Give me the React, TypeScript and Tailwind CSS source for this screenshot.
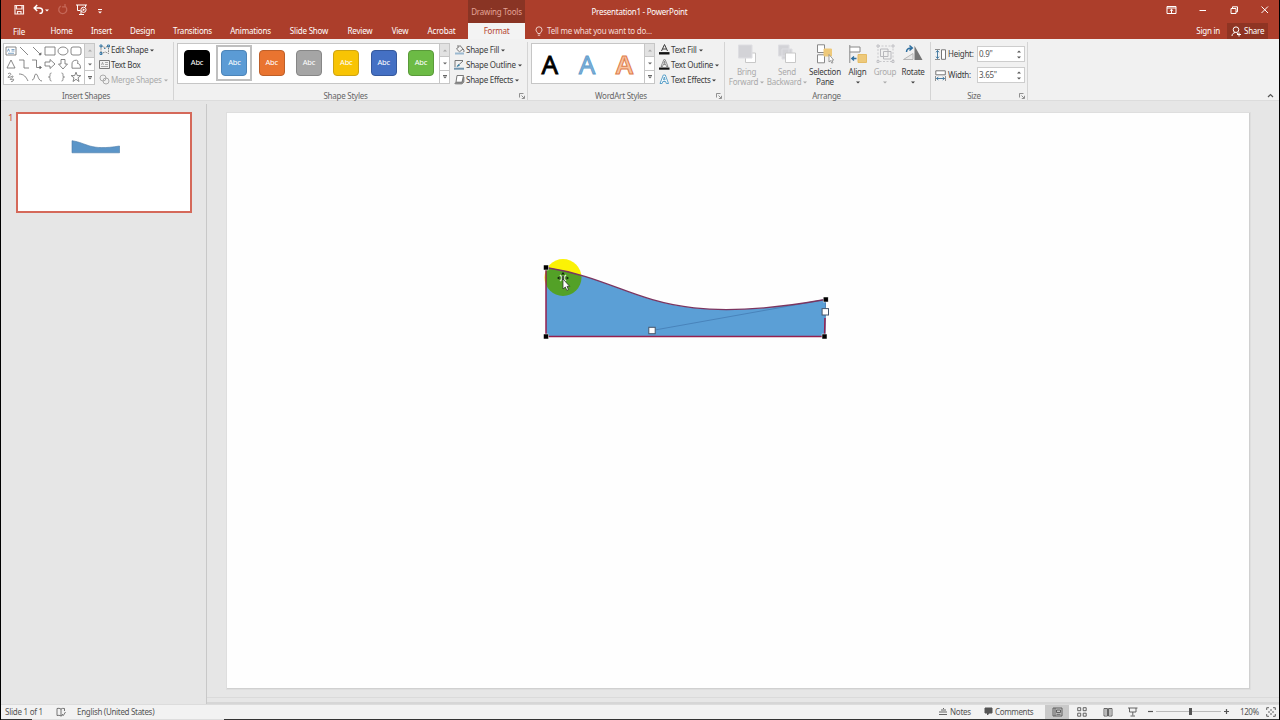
import React from 'react';
import clsx from 'clsx';

const TABS = [
  { label: 'File', cls: 'w-9 pt-px' },
  { label: 'Home', cls: 'w-[49px]' },
  { label: 'Insert', cls: 'w-[31px]' },
  { label: 'Design', cls: 'w-[51px]' },
  { label: 'Transitions', cls: 'w-[49px]' },
  { label: 'Animations', cls: 'w-[67px]' },
  { label: 'Slide Show', cls: 'w-[50px]' },
  { label: 'Review', cls: 'w-[52px]' },
  { label: 'View', cls: 'w-7' },
  { label: 'Acrobat', cls: 'w-[54px] pl-px' },
];

const SHAPE_STYLES = [
  'bg-black border-black',
  'bg-[#5b9bd5] border-[#4c84b8]',
  'bg-[#e97430] border-[#bd5f29]',
  'bg-[#a5a5a5] border-[#868686]',
  'bg-[#f8c404] border-[#cda312]',
  'bg-[#4470c4] border-[#35589c]',
  'bg-[#6cbb45] border-[#5a9a3a]',
];

// 12x12 glyphs of the shape gallery, row by row
const SHAPES: React.ReactNode[] = [
  <><path d="M1 2h10v8H1z" /><path d="M2.500 6.500l1-2.700 1 2.700M6.500 4.500H9.500M6.500 6H9.500M3 8.300h6" stroke="#4a7fb0" strokeWidth=".7" /></>,
  <path d="M2 2l8 8" />,
  <><path d="M2 2l7.5 7.500" /><path d="M8 9.800h2V7.800z" fill="#6a6a6a" /></>,
  <path d="M1 2h10v8H1z" />,
  <ellipse cx="6" cy="6" rx="5" ry="4" />,
  <rect x="1" y="2" width="10" height="8" rx="2" />,
  <path d="M6 2l4 8H2z" />,
  <path d="M1 2h5v8h5" />,
  <><path d="M1 2h4.500v7.500H9" /><path d="M8.800 8.300l1.700 1.200-1.700 1.200z" fill="#6a6a6a" /></>,
  <path d="M1 4h5V1.500L11 6l-5 4.500V8H1z" />,
  <path d="M4 1.500h4V6h2.500L6 11 1.500 6H4z" />,
  <path d="M2 10.200V6q0-3.800 4.500-3.800Q9 2.500 7.500 5.500 10.500 5.500 10.500 10.200z" />,
  <path d="M3 3c2-2 4 0 2 1.500S2 6 3.500 6.500 8 4 8 5.500 4 8 5.500 8.500 9 7 8.500 9 6 10.500 6 10.500" />,
  <path d="M1 3c5 0 7 3 9 7" />,
  <path d="M1 9c3 0 2-6 4-6s2 7 6 7" />,
  <path d="M7.500 2C6 2 6 3 6 4.500S5.500 6 4.500 6C5.500 6 6 6.200 6 7.500S6 10 7.500 10" />,
  <path d="M4.500 2C6 2 6 3 6 4.500S6.500 6 7.500 6C6.500 6 6 6.200 6 7.500S6 10 4.500 10" />,
  <path d="M6 1.200l1.300 3.400h3.500L8 6.800l1 3.700-3-2.200-3 2.200 1-3.700L1.200 4.600h3.500z" />,
];

interface IconProps {
  w: number;
  h: number;
  className?: string;
  children: React.ReactNode;
}

const Icon: React.FC<IconProps> = ({ w, h, className, children }) => (
  <svg width={w} height={h} viewBox={`0 0 ${w} ${h}`} fill="none" stroke="currentColor" className={clsx('shrink-0', className)}>
    {children}
  </svg>
);

const Caret: React.FC<{ className?: string }> = ({ className }) => (
  <svg width="4" height="3" viewBox="0 0 4 3" className={clsx('shrink-0 fill-current', className)}>
    <path d="M0 .5h4L2 2.600z" />
  </svg>
);

const GalleryScroll = () => (
  <div className="w-[10px] border-l border-[#c6c6c6] flex flex-col text-[#666]">
    <div className="flex-1 flex items-center justify-center bg-[#e2e2e2] text-[#aaa]"><Caret className="rotate-180" /></div>
    <div className="flex-1 flex items-center justify-center border-y border-[#c6c6c6]"><Caret /></div>
    <div className="flex-1 flex flex-col items-center justify-center">
      <div className="w-1 h-px bg-current"></div>
      <Caret />
    </div>
  </div>
);

const Launcher = () => (
  <Icon w={6} h={6} className="text-[#777]">
    <path d="M.5 4.500v-4h4M2.500 2.500l2.500 2.500M5.500 2.800v2.700H2.800" strokeWidth=".8" />
  </Icon>
);

interface GroupProps {
  name: string;
  width: string;
  launcher?: boolean;
  children: React.ReactNode;
}

const Group: React.FC<GroupProps> = ({ name, width, launcher, children }) => (
  <div className={clsx('h-[58px] mt-[3px] border-r border-[#d4d4d4] flex flex-col shrink-0', width)}>
    <div className="h-[47px] shrink-0 flex items-start">{children}</div>
    <div className="h-[11px] pt-[2px] flex items-center text-[#666]">
      <span className="flex-1 text-center pr-[2px]">{name}</span>
      {launcher && <div className="w-2"><Launcher /></div>}
    </div>
  </div>
);

interface CommandProps {
  icon: React.ReactNode;
  label: string;
  caret?: boolean;
  disabled?: boolean;
}

const Command: React.FC<CommandProps> = ({ icon, label, caret, disabled }) => (
  <div className={clsx('h-[15.2px] flex items-center', disabled ? 'text-[#aaa]' : 'text-[#3c3c3c]')}>
    <div className="w-3 flex">{icon}</div>
    <span>{label}</span>
    {caret && <Caret className="ml-[2px] mt-px" />}
  </div>
);

interface BigButtonProps {
  icon: React.ReactNode;
  width: string;
  lines: string[];
  caret?: boolean;
  disabled?: boolean;
}

const BigButton: React.FC<BigButtonProps> = ({ icon, width, lines, caret, disabled }) => (
  <div className={clsx('flex flex-col items-center shrink-0', width, disabled ? 'text-[#aaa]' : 'text-[#3c3c3c]')}>
    <div className="h-6 pt-[2px]">{icon}</div>
    <div className="h-[11px] leading-[11px]">{lines[0]}</div>
    <div className="h-[10px] leading-[10px] flex items-center gap-[2px]">
      {lines[1]}
      {caret && <Caret className="mt-px" />}
    </div>
  </div>
);

const TitleBar = () => (
  <div className="h-[23px] flex text-white">
    <div className="w-[467px] flex items-start pt-1 pl-[13px]">
      <Icon w={11} h={11} className="text-[#fbe9e6]">
        <path d="M1 1.500h8.500v8.500H1zM2.500 2v3h5.500V2M3.500 10V7.500h3.500V10" strokeWidth="1.200" />
      </Icon>
      <Icon w={11} h={11} className="ml-2">
        <path d="M1 4h5.500q3 0 3 2.800T6.500 9.200M4.200 1L1.200 4l3 3" strokeWidth="1.500" />
      </Icon>
      <Caret className="mt-[5px] ml-px" />
      <Icon w={11} h={11} className="ml-2 text-[#c56757]">
        <path d="M7.500 2A4 4 0 1 1 4 2M8 0v2.800H5" strokeWidth="1.300" />
      </Icon>
      <Icon w={12} h={12} className="ml-2">
        <path d="M0 1h11M1.500 1v5.500h3M9.500 1v2M3 10.500h5M5 7v3" />
        <circle cx="7.500" cy="5.800" r="2.600" />
        <path d="M6.800 4.600v2.400L8.800 5.800z" fill="currentColor" strokeWidth=".3" />
      </Icon>
      <div className="ml-[10px] mt-[5px] flex flex-col items-center gap-px">
        <div className="w-1 h-px bg-white"></div>
        <Caret />
      </div>
    </div>
    <div className="w-[57px] bg-[#893424] text-[#e3a397] text-center leading-6 tracking-[-0.2px]">Drawing Tools</div>
    <div className="w-[229px] text-center leading-6 tracking-[-0.25px]">Presentation1 - PowerPoint</div>
    <div className="flex-1 flex justify-end items-start pt-1 pr-[10px]">
      <Icon w={11} h={11}>
        <path d="M1 2.500h9v7H1zM1 4h9M5.500 9V5.300M3.800 6.900l1.700-1.600 1.700 1.600" />
      </Icon>
      <Icon w={8} h={11} className="ml-[22px]"><path d="M.5 6.500h6.500" /></Icon>
      <Icon w={9} h={11} className="ml-[23px]"><path d="M1 4.500h5v5H1zM2.500 4.500V2.800h5v5H6" /></Icon>
      <Icon w={9} h={11} className="ml-[21px]"><path d="M1.500 2.500l6.500 6.500M8 2.500l-6.500 6.500" /></Icon>
    </div>
  </div>
);

const TabRow = () => (
  <div className="h-4 flex items-stretch text-white leading-4">
    {TABS.map((tab) => (
      <div key={tab.label} className={clsx('text-center whitespace-nowrap tracking-[-0.2px]', tab.cls)}>{tab.label}</div>
    ))}
    <div className="w-[57px] bg-[#f3f3f3] text-[#b5432f] text-center">Format</div>
    <div className="flex-1 flex items-center pl-[10px] text-[#f6dcd7]">
      <Icon w={8} h={11}>
        <path d="M2.800 7.500C2.500 6.300 1 5.500 1 3.800a3 3 0 0 1 6 0c0 1.700-1.500 2.500-1.800 3.700zM2.800 9.200h2.400" strokeWidth=".9" />
      </Icon>
      <span className="ml-1 tracking-[-0.24px]">Tell me what you want to do...</span>
    </div>
    <div className="mr-[7px]">Sign in</div>
    <div className="w-[41px] mr-[11px] bg-[#8f3423] flex items-center pl-1">
      <Icon w={11} h={11}>
        <circle cx="5" cy="3.700" r="2.800" />
        <path d="M1 10c0-2 1.500-3.200 3-3.400M5.500 6.600l1.500 1.500M8 6.500v4M6 8.500h4" />
      </Icon>
      <span className="ml-[2px]">Share</span>
    </div>
  </div>
);

const Ribbon = () => (
  <div className="h-[62px] bg-[#f1f1f1] border-b border-[#dcdcdc] flex text-[#444]">
    {/* Insert Shapes */}
    <Group name="Insert Shapes" width="w-[173px]">
      <div className="mt-px ml-[2px] w-[92px] h-[42px] border border-[#c6c6c6] bg-white flex shrink-0">
        <div className="flex-1 grid grid-cols-6 items-center justify-items-center pb-px pr-px">
          {SHAPES.map((shape, idx) => (
            <Icon key={idx} w={12} h={12} className="text-[#6a6a6a] [stroke-width:.8]">{shape}</Icon>
          ))}
        </div>
        <GalleryScroll />
      </div>
      <div className="ml-1">
        <Command caret label="Edit Shape" icon={
          <Icon w={11} h={11} className="text-[#7a7a7a]">
            <path d="M2 2l4 1.500L9.500 2v7.500L6.500 8 2 9.500z" strokeDasharray="1.500 1" />
            <path d="M1 1h2v2H1zM8.500 1h2v2h-2zM1 8.500h2v2H1zM5 4.500h1.500" stroke="#2f76a8" strokeWidth=".9" />
          </Icon>
        } />
        <Command label="Text Box" icon={
          <Icon w={11} h={11} className="text-[#7a7a7a]">
            <path d="M.5 1.500h10v8H.5z" />
            <path d="M2.500 6l1-2.700 1 2.700M6 3.500h3M6 5.500h3M2 7.500h7" strokeWidth=".6" />
          </Icon>
        } />
        <Command caret disabled label="Merge Shapes" icon={
          <Icon w={11} h={11}><circle cx="4" cy="4" r="3" /><circle cx="7" cy="7" r="3" /></Icon>
        } />
      </div>
    </Group>

    {/* Shape Styles */}
    <Group name="Shape Styles" width="w-[354px]" launcher>
      <div className="mt-px ml-[3px] w-[273px] h-[41px] border border-[#c6c6c6] bg-white flex shrink-0">
        <div className="flex-1 flex items-center justify-between pl-px pb-[2px]">
          {SHAPE_STYLES.map((style, idx) => (
            <div key={style} className={clsx('p-[3px] border-2', idx === 1 ? 'border-[#bfbfbf]' : 'border-transparent')}>
              <div className={clsx('size-[26px] rounded-[4px] border text-white text-[7.500px] tracking-[-0.2px] text-center leading-[23px]', style)}>Abc</div>
            </div>
          ))}
        </div>
        <GalleryScroll />
      </div>
      <div className="ml-1">
        <Command caret label="Shape Fill" icon={
          <Icon w={11} h={11} className="text-[#6a6a6a]">
            <path d="M2.500 5l3.500-3.500L9 5 5.500 7.800zM4 3.500V1M9.300 5q1.200 2 .5 3" strokeWidth=".9" />
            <path d="M1 9.500h9" stroke="#9bb9d0" strokeWidth="2" />
          </Icon>
        } />
        <Command caret label="Shape Outline" icon={
          <Icon w={11} h={11} className="text-[#6a6a6a]">
            <path d="M1 8V1.500h8M3.500 7l5.500-5" strokeWidth=".9" />
            <path d="M3 7.500l1.500-2 1 1z" fill="#2f7fa8" stroke="#2f7fa8" strokeWidth=".6" />
            <path d="M0 9.700h10" stroke="#7394ad" strokeWidth="2" />
          </Icon>
        } />
        <Command caret label="Shape Effects" icon={
          <Icon w={11} h={11} className="text-[#6a6a6a]">
            <path d="M2 8.500c-2 .5-1.500 1.500.5 1.500H8l2-2V3L8.500 4v4.500z" fill="#999" strokeWidth=".6" />
            <path d="M3 1.500h6.500L8 8.200H2z" fill="#fff" strokeWidth=".9" />
          </Icon>
        } />
      </div>
    </Group>

    {/* WordArt Styles */}
    <Group name="WordArt Styles" width="w-[197px]" launcher>
      <div className="mt-px ml-[3px] w-[124px] h-[41px] border border-[#c6c6c6] bg-white flex shrink-0">
        <div className="flex-1 -ml-px pr-px pt-[2px] grid grid-cols-3 items-center justify-items-center text-[26px] leading-[37px]">
          <span className="text-black [-webkit-text-stroke:0.8px_#000]">A</span>
          <span className="text-[#7db0da] [-webkit-text-stroke:0.8px_#5f9bc9]">A</span>
          <span className="text-[#f7c19f] font-semibold [-webkit-text-stroke:1px_#df7d4a]">A</span>
        </div>
        <GalleryScroll />
      </div>
      <div className="ml-1">
        <Command caret label="Text Fill" icon={
          <Icon w={11} h={11}>
            <path d="M2.500 7L5.500.5 8.500 7M3.500 5h4" />
            <path d="M0 9.300h10.500" stroke="#111" strokeWidth="2.400" />
          </Icon>
        } />
        <Command caret label="Text Outline" icon={
          <Icon w={11} h={11} className="text-[#666]">
            <path d="M2 7.500L4.800.7h1.400L9 7.500H7.500L6.800 5.500H4.200L3.500 7.500zM4.800 4.300L5.500 2.200l.7 2.100z" strokeWidth=".7" />
            <path d="M0 9.600h10.500" stroke="#111" strokeWidth="2.200" />
          </Icon>
        } />
        <Command caret label="Text Effects" icon={
          <Icon w={11} h={11}>
            <path d="M1 9.500L4.300 1h2L9.500 9.500H7.300L6.700 7.500H3.800L3.100 9.500zM4.500 5.800L5.300 3l.8 2.800z" fill="#fff" stroke="#4b97c4" strokeWidth=".9" />
          </Icon>
        } />
      </div>
    </Group>

    {/* Arrange */}
    <Group name="Arrange" width="w-[206px]">
      <BigButton disabled caret width="w-[43px]" lines={['Bring', 'Forward']} icon={
        <Icon w={18} h={20}><path d="M7.500 9H17.500v9.500H7.500z" fill="#fff" stroke="#c8c8c8" /><path d="M.5 1H14v13H.5z" fill="#d3d3d7" stroke="#dedee2" /></Icon>
      } />
      <BigButton disabled caret width="w-[38px]" lines={['Send', 'Backward']} icon={
        <Icon w={18} h={20}><path d="M.5 1H11v11H.5zM4 5h10v10H4z" fill="#d3d3d7" stroke="#dedee2" /><path d="M7.500 9H17.500v9.500H7.500z" fill="#fff" stroke="#c8c8c8" /></Icon>
      } />
      <BigButton width="w-[38px]" lines={['Selection', 'Pane']} icon={
        <Icon w={18} h={20} className="text-[#888]">
          <path d="M1.500.8h7v7.700h-7zM1.500 10.800h7v8h-7z" fill="#fff" />
          <path d="M8 5h7.500v7H8z" fill="#eec97a" stroke="#eec97a" />
          <path d="M13 10.500v7.500l1.600-1.400 1.200 2.600 1.200-.6-1.200-2.500h1.900z" fill="#fff" strokeWidth=".8" />
        </Icon>
      } />
      <BigButton caret width="w-[27px]" lines={['Align', '']} icon={
        <Icon w={18} h={20} className="text-[#888]">
          <path d="M.8 1v18M.8 3H11v5H.8" fill="#fff" />
          <path d="M9 10.500h8.500v8H9z" fill="#eec97a" stroke="#e5bc66" />
          <path d="M2.500 14.500H7.500M5 12.500l-2.200 2 2.200 2" stroke="#2f6f9f" strokeWidth="1.400" />
        </Icon>
      } />
      <BigButton disabled caret width="w-7" lines={['Group', '']} icon={
        <Icon w={19} h={20} className="text-[#b8b8bc]">
          <path d="M2 2h15v15.500H2z" strokeDasharray="2 1.500" strokeWidth=".7" />
          <path d="M4.500 5h7.500v7.500H4.500zM7.500 7.500h7.500V15H7.500z" />
          <path d="M1 1h2v2H1zM16 1h2v2h-2zM1 16.500h2v2H1zM16 16.500h2v2h-2z" fill="#f1f1f1" strokeWidth=".8" />
        </Icon>
      } />
      <BigButton caret width="w-7" lines={['Rotate', '']} icon={
        <Icon w={20} h={20}>
          <path d="M10 15.500V9.500L.5 15.500z" fill="#e8e8e8" stroke="#a8a8a8" strokeWidth=".8" />
          <path d="M11.500 1.800v14.200h8z" fill="#757575" stroke="none" />
          <path d="M3.500 8q0-4 5-4M6.500 1.500L9.300 4 6.500 6.500" stroke="#2f6f9f" strokeWidth="1.500" />
        </Icon>
      } />
    </Group>

    {/* Size */}
    <Group name="Size" width="w-[97px]" launcher>
      <div className="ml-1 mt-[4px] flex flex-col gap-[5px]">
        {[{ name: 'Height:', value: '0.9"' }, { name: 'Width:', value: '3.65"' }].map((field) => (
          <div key={field.name} className="h-4 flex items-center text-[#3c3c3c]">
            {field.name === 'Height:' ? (
              <Icon w={11} h={11} className="text-[#777]">
                <path d="M6.500.8h4v9.500h-4z" fill="#fff" />
                <path d="M0 .5h5M0 10.500h5" strokeWidth=".8" />
                <path d="M2.500 1.500v8M1 3.300l1.500-1.800L4 3.300M1 7.700l1.500 1.800L4 7.700" stroke="#39739c" strokeWidth=".9" />
              </Icon>
            ) : (
              <Icon w={11} h={11} className="text-[#777]">
                <path d="M.8.800h9.500v4H.8z" fill="#fff" />
                <path d="M.5 6v5M10.500 6v5" strokeWidth=".8" />
                <path d="M1.500 8.500h8M3.300 7L1.500 8.500 3.300 10M7.700 7l1.800 1.500L7.700 10" stroke="#39739c" strokeWidth=".9" />
              </Icon>
            )}
            <span className="w-[31px] pl-[2px] whitespace-nowrap">{field.name}</span>
            <div className="w-[48px] h-4 bg-white border border-[#cdcdcd] flex items-center justify-between pl-px pr-[3px] text-[#555]">
              <span>{field.value}</span>
              <div className="flex flex-col gap-[3px]">
                <Caret className="rotate-180" />
                <Caret />
              </div>
            </div>
          </div>
        ))}
      </div>
    </Group>
    <div className="flex-1 flex justify-end items-end pr-[5px] pb-[2px] text-[#555]">
      <Icon w={7} h={5}><path d="M1 4l2.500-2.500L6 4" strokeWidth="1.200" /></Icon>
    </div>
  </div>
);

const CURVE = 'M546 267.500C639 282 652 330.500 825.500 299.500L824.500 336.500H546z';

const Slide = () => (
  <svg width="1022" height="575" viewBox="227 113 1022 575" fill="none">
    <clipPath id="shape"><path d={CURVE} /></clipPath>
    <circle cx="563" cy="277.500" r="18.500" fill="#fbf205" />
    <path d={CURVE} fill="#5b9fd6" />
    <circle cx="563" cy="277.500" r="18.500" fill="#53a127" clipPath="url(#shape)" />
    <path d="M825.500 299.500L652 330.500" stroke="#4680b8" strokeWidth=".9" />
    <path d="M825.500 299.500L825 336" stroke="#4680b8" />
    <path d="M825.500 299.500C652 330.500 639 282 546 267.500" stroke="#7b3560" strokeWidth="1.300" />
    <path d="M546 267.500V336.500H824.500L825 318" stroke="#95214f" strokeWidth="1.500" />
    {[[546, 267.5], [546, 336.5], [824.5, 336.5], [825.7, 299.5]].map(([x, y]) => (
      <rect key={`${x}-${y}`} x={x - 2.5} y={y - 2.5} width="5" height="5" fill="#000" stroke="#fff" strokeWidth=".5" />
    ))}
    {[[652, 330.5], [825.3, 311.8]].map(([x, y]) => (
      <rect key={x} x={x - 3.2} y={y - 3.2} width="6.400" height="6.400" fill="#fff" stroke="#44546a" />
    ))}
    {/* edit-points cursor */}
    <path d="M560 275l6 6M566 275l-6 6" stroke="#dce9d4" strokeWidth="1.400" />
    <circle cx="563" cy="278" r="2.200" fill="#b9cfae" />
    <path d="M563 272l1.800 2.500h-3.600zM557 278l2.500-1.800v3.600zM569 278l-2.500-1.800v3.600zM562.300 276h1.400v4h-1.400z" fill="#14200f" />
    <path d="M563 279v10l2.300-2 1.500 3.400 1.700-.8-1.500-3.200h2.700z" fill="#fff" stroke="#222" strokeWidth=".7" />
  </svg>
);

const Workspace = () => (
  <div className="flex-1 flex min-h-0">
    <div className="w-[205px] mt-[3px] pt-2 pl-[7px] flex items-start">
      <span className="w-2 text-[9.500px] leading-[11px] text-[#c9513c]">1</span>
      <div className="w-[176px] h-[101px] border-2 border-[#d5695a] bg-white">
        <svg width="172" height="97" viewBox="18 114 172 97">
          <path d="M72 140.700C87.500 143 89.500 151 119.500 146V152.800H72z" fill="#5b95c8" stroke="#4a7ba8" strokeWidth=".6" />
        </svg>
      </div>
    </div>
    <div className="flex-1 mt-[3px] border-l border-[#c8c8c8] flex flex-col">
      <div className="flex-1 pt-[9px] pl-5">
        <div className="w-[1023px] h-[576px] bg-[#fefefe] border-r border-b border-[#d0d0d0] shadow-[0_0_0_1px_#dedede]">
          <Slide />
        </div>
      </div>
      <div className="h-[7px] border-t border-[#dadada] flex items-end">
        <div className="flex-1 h-[2px] bg-[#d6d6d6]"></div>
      </div>
    </div>
  </div>
);

const StatusBar = () => (
  <div className="h-[15px] bg-[#f2f2f2] border-t border-[#dcdcdc] flex items-center text-[#555] pb-px">
    <div className="w-[55px] pl-1 text-[8px]">Slide 1 of 1</div>
    <Icon w={10} h={10}>
      <path d="M5 2Q3 .8 1 1.500v7Q3 7.800 5 9zM5 2q1.500-1 3.500-.5V4M5 9l1.500-.6M6 7l1.300 1.500L9.500 5" strokeWidth=".8" />
    </Icon>
    <div className="ml-[11px] flex-1 tracking-[-0.31px]">English (United States)</div>
    <div className="w-[45px] flex items-center">
      <Icon w={9} h={9}><path d="M0 5h8M0 7.500h8M2 3h5M4.500 1v1" strokeWidth=".9" /></Icon>
      <span className="ml-[2px]">Notes</span>
    </div>
    <div className="w-[61px] flex items-center tracking-[-0.35px]">
      <Icon w={9} h={9}><path d="M1 1h7v5H5L3.500 8V6H1z" fill="currentColor" /></Icon>
      <span className="ml-[2px]">Comments</span>
    </div>
    <div className="w-[24px] h-[14px] bg-[#c9c9c9] flex items-center justify-center">
      <Icon w={11} h={10}><path d="M1 1h9v8H1zM3 1v8M4.500 3h4v2.500h-4zM4.500 7.300h4" strokeWidth=".9" /></Icon>
    </div>
    <div className="w-[26px] flex justify-center">
      <Icon w={10} h={10}><path d="M.7.700h3v3h-3zM6.200.700h3v3h-3zM.7 6.200h3v3h-3zM6.200 6.200h3v3h-3z" strokeWidth=".9" /></Icon>
    </div>
    <div className="w-[25px] flex justify-center">
      <Icon w={10} h={10}>
        <path d="M1 1.500h3.500V9H1zM5.500 1.500H9V9H5.500z" strokeWidth=".9" />
        <path d="M2 3h2M2 5h2M2 7h2M6 3h2M6 5h2M6 7h2" strokeWidth=".7" />
      </Icon>
    </div>
    <div className="w-[25px] flex justify-center">
      <Icon w={10} h={10}><path d="M0 1h9.500M1.500 1v4h6.500V1M4.800 5v3.500M2.500 9h4.500" strokeWidth=".9" /></Icon>
    </div>
    <div className="w-[88px] pl-[3px] flex items-center gap-[3px]">
      <Icon w={5} h={5}><path d="M0 2.500h5" strokeWidth="1.200" /></Icon>
      <div className="w-[65px] flex items-center">
        <div className="flex-1 h-px bg-[#bbb]"></div>
        <div className="w-[3px] h-[7px] bg-[#555]"></div>
        <div className="w-[29px] h-px bg-[#bbb]"></div>
      </div>
      <Icon w={5} h={5}><path d="M0 2.500h5M2.500 0v5" strokeWidth="1.200" /></Icon>
    </div>
    <div className="w-[33px] pl-[7px] tracking-[-0.4px]">120%</div>
    <Icon w={10} h={10} className="mr-[3px]">
      <path d="M.7 3V.7H3M7 .7h2.300V3M9.300 7v2.300H7M3 9.300H.7V7" strokeWidth=".9" />
      <path d="M5 2v2M5 8V6M2 5h2M8 5H6" strokeWidth=".9" />
    </Icon>
  </div>
);

export default function App() {
  return (
    <div className="w-[1280px] h-[720px] bg-[#e6e6e6] border-x border-black flex flex-col overflow-hidden text-[8px] tracking-[-0.25px] leading-none whitespace-nowrap font-['Noto_Sans','Open_Sans',sans-serif] select-none">
      <div className="bg-[#ac3e2b]">
        <TitleBar />
        <TabRow />
      </div>
      <Ribbon />
      <Workspace />
      <StatusBar />
      <div className="h-px flex bg-[#333]">
        <div className="w-[31px]"></div>
        <div className="w-48 bg-[#ddd]"></div>
      </div>
    </div>
  );
}
